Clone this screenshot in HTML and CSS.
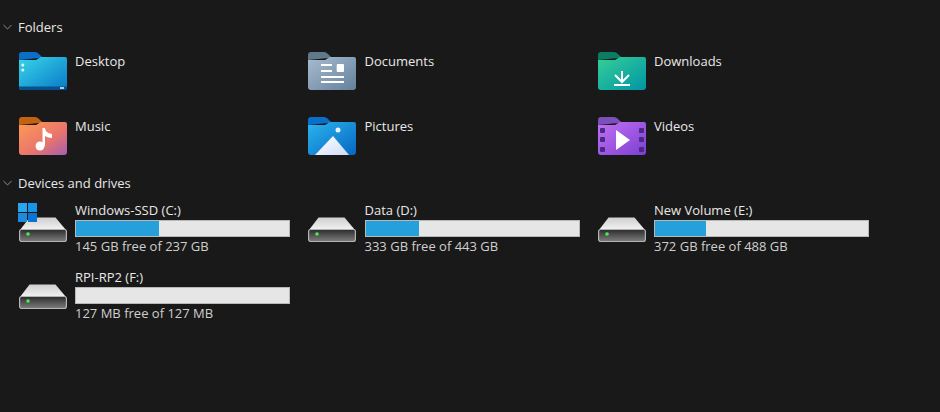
FILE: index.html
```html
<!DOCTYPE html>
<html lang="en">
<head>
<meta charset="utf-8">
<title>This PC</title>
<link rel="stylesheet" href="styles.css">
</head>
<body>
<svg class="defs" width="0" height="0" aria-hidden="true">
  <defs>
    <linearGradient id="gDesktop" x1="0" y1="0" x2="1" y2="1"><stop offset="0" stop-color="#37d6e8"/><stop offset="1" stop-color="#0a78c8"/></linearGradient>
    <linearGradient id="gDocs" x1="0" y1="0" x2="1" y2="1"><stop offset="0" stop-color="#a9bccf"/><stop offset="1" stop-color="#64809c"/></linearGradient>
    <linearGradient id="gDown" x1="0" y1="0" x2="1" y2="1"><stop offset="0" stop-color="#35cf97"/><stop offset="1" stop-color="#0095a5"/></linearGradient>
    <linearGradient id="gMusic" x1="0" y1="0" x2="1" y2="1"><stop offset="0" stop-color="#ff9a52"/><stop offset=".6" stop-color="#e8746e"/><stop offset="1" stop-color="#a45fb0"/></linearGradient>
    <linearGradient id="gPics" x1="0" y1="0" x2="1" y2="1"><stop offset="0" stop-color="#2cb4f0"/><stop offset="1" stop-color="#0567c0"/></linearGradient>
    <linearGradient id="gVideo" x1="0" y1="0" x2="1" y2="1"><stop offset="0" stop-color="#c271f5"/><stop offset="1" stop-color="#7c3fd0"/></linearGradient>
    <linearGradient id="gMount" x1="0" y1="0" x2="1" y2="1"><stop offset="0" stop-color="#fff"/><stop offset="1" stop-color="#cfdcf8"/></linearGradient>
    <linearGradient id="gDriveTop" x1="0" y1="0" x2="0" y2="1"><stop offset="0" stop-color="#cfcfcf"/><stop offset="1" stop-color="#f2f2f2"/></linearGradient>
    <linearGradient id="gDriveFace" x1="0" y1="0" x2="0" y2="1"><stop offset="0" stop-color="#2b2b2b"/><stop offset="1" stop-color="#7d7d7d"/></linearGradient>
    <symbol id="drive" viewBox="0 0 48 25">
      <path d="M10.500 0.500H36.500L47 13H1Z" fill="url(#gDriveTop)"/>
      <rect x="0.600" y="12.500" width="46.800" height="12" rx="2" fill="url(#gDriveFace)" stroke="#b4b4b4" stroke-width="1.200"/>
      <circle cx="9" cy="17" r="1.800" fill="#44f050"/>
    </symbol>
  </defs>
</svg>

<section class="group">
  <h2 class="group-head"><svg class="chevron" viewBox="0 0 10 6"><path d="M0.500 0.700L5 5.200L9.500 0.700"/></svg>Folders</h2>
  <div class="grid folders">
    <div class="item">
      <svg class="folder" viewBox="0 0 48 38">
        <path d="M3 0H16Q18 0 20 2L24 6H20L0 8V3Q0 0 3 0Z" fill="#0a6fc9"/>
        <path d="M0 8H17L22 5H46Q48 5 48 7V35Q48 38 45 38H3Q0 38 0 35Z" fill="url(#gDesktop)"/>
        <path d="M0 34.500H48V35Q48 38 45 38H3Q0 38 0 35Z" fill="#07508e"/>
        <circle cx="3.800" cy="13" r="1.500" fill="#e8fbff"/><circle cx="3.800" cy="18" r="1.500" fill="#e8fbff"/>
        <rect x="41" y="35" width="4" height="2" fill="#a9cfe6"/>
      </svg>
      <span class="name">Desktop</span>
    </div>
    <div class="item">
      <svg class="folder" viewBox="0 0 48 38">
        <path d="M3 0H16Q18 0 20 2L24 6H20L0 8V3Q0 0 3 0Z" fill="#5f7a88"/>
        <path d="M0 8H17L22 5H46Q48 5 48 7V35Q48 38 45 38H3Q0 38 0 35Z" fill="url(#gDocs)"/>
        <path d="M13 13H24M13 19H24M13 25H36M13 30H36" stroke="#fff" stroke-width="2" fill="none"/>
        <rect x="28.700" y="12" width="7.300" height="8" rx="1" fill="#fff"/>
      </svg>
      <span class="name">Documents</span>
    </div>
    <div class="item">
      <svg class="folder" viewBox="0 0 48 38">
        <path d="M3 0H16Q18 0 20 2L24 6H20L0 8V3Q0 0 3 0Z" fill="#0b7d63"/>
        <path d="M0 8H17L22 5H46Q48 5 48 7V35Q48 38 45 38H3Q0 38 0 35Z" fill="url(#gDown)"/>
        <path d="M24 19V29.500M17 23L24 30L31 23M16 33H32" stroke="#fff" stroke-width="2" fill="none"/>
      </svg>
      <span class="name">Downloads</span>
    </div>
    <div class="item">
      <svg class="folder" viewBox="0 0 48 38">
        <path d="M3 0H16Q18 0 20 2L24 6H20L0 8V3Q0 0 3 0Z" fill="#c4630f"/>
        <path d="M0 8H17L22 5H46Q48 5 48 7V35Q48 38 45 38H3Q0 38 0 35Z" fill="url(#gMusic)"/>
        <circle cx="21" cy="29" r="4.500" fill="#fff"/>
        <path d="M23.500 29V11H26Q26 16 33 17V21Q29 21 26 19V29Z" fill="#fff"/>
      </svg>
      <span class="name">Music</span>
    </div>
    <div class="item">
      <svg class="folder" viewBox="0 0 48 38">
        <path d="M3 0H16Q18 0 20 2L24 6H20L0 8V3Q0 0 3 0Z" fill="#0a6fc9"/>
        <path d="M0 8H17L22 5H46Q48 5 48 7V35Q48 38 45 38H3Q0 38 0 35Z" fill="url(#gPics)"/>
        <circle cx="30" cy="13" r="2.500" fill="#e6f5ff"/>
        <path d="M7 38L25 19L41 38Z" fill="url(#gMount)"/>
      </svg>
      <span class="name">Pictures</span>
    </div>
    <div class="item">
      <svg class="folder" viewBox="0 0 48 38">
        <path d="M3 0H16Q18 0 20 2L24 6H20L0 8V3Q0 0 3 0Z" fill="#7d4fb8"/>
        <path d="M0 8H17L22 5H46Q48 5 48 7V35Q48 38 45 38H3Q0 38 0 35Z" fill="url(#gVideo)"/>
        <g fill="#4b2a86"><rect x="2" y="11" width="5" height="5" rx="1"/><rect x="2" y="20" width="5" height="5" rx="1"/><rect x="2" y="30" width="5" height="5" rx="1"/><rect x="41" y="11" width="5" height="5" rx="1"/><rect x="41" y="20" width="5" height="5" rx="1"/><rect x="41" y="30" width="5" height="5" rx="1"/></g>
        <path d="M18 13L32 23L18 33Z" fill="#fff"/>
      </svg>
      <span class="name">Videos</span>
    </div>
  </div>
</section>

<section class="group">
  <h2 class="group-head"><svg class="chevron" viewBox="0 0 10 6"><path d="M0.500 0.700L5 5.200L9.500 0.700"/></svg>Devices and drives</h2>
  <div class="grid drives">
    <div class="drive">
      <svg class="drive-icon"><use href="#drive"/></svg>
      <svg class="win-badge" viewBox="0 0 19 19">
        <rect x="0" y="0" width="9" height="9" fill="#2aa6ee"/><rect x="10" y="0" width="9" height="9" fill="#1b94e6"/>
        <rect x="0" y="10" width="9" height="9" fill="#1b8be0"/><rect x="10" y="10" width="9" height="9" fill="#0b74d2"/>
      </svg>
      <div class="info">
        <div class="name">Windows-SSD (C:)</div>
        <div class="bar"><div class="fill" style="width:38.8%"></div></div>
        <div class="sub">145 GB free of 237 GB</div>
      </div>
    </div>
    <div class="drive">
      <svg class="drive-icon"><use href="#drive"/></svg>
      <div class="info">
        <div class="name">Data (D:)</div>
        <div class="bar"><div class="fill" style="width:25%"></div></div>
        <div class="sub">333 GB free of 443 GB</div>
      </div>
    </div>
    <div class="drive">
      <svg class="drive-icon"><use href="#drive"/></svg>
      <div class="info">
        <div class="name">New Volume (E:)</div>
        <div class="bar"><div class="fill" style="width:23.8%"></div></div>
        <div class="sub">372 GB free of 488 GB</div>
      </div>
    </div>
    <div class="drive">
      <svg class="drive-icon"><use href="#drive"/></svg>
      <div class="info">
        <div class="name">RPI-RP2 (F:)</div>
        <div class="bar"><div class="fill" style="width:0"></div></div>
        <div class="sub">127 MB free of 127 MB</div>
      </div>
    </div>
  </div>
</section>
</body>
</html>
```

FILE: styles.css
```css
html, body {
  margin: 0;
  height: 100%;
}
body {
  background: #191919;
  color: #e8e8e8;
  font-family: "Open Sans", "Liberation Sans", sans-serif;
  font-size: 13px;
  line-height: 18px;
  overflow: hidden;
}
.defs {
  position: absolute;
}
.group-head {
  display: flex;
  align-items: center;
  gap: 6px;
  height: 18px;
  margin: 0;
  padding-left: 3px;
  font: inherit;
}
.group:first-of-type {
  padding-top: 18px;
}
.group + .group {
  margin-top: 19px;
}
.chevron {
  width: 9px;
  height: 6px;
  fill: none;
  stroke: #9a9a9a;
  stroke-width: 1;
}
.grid {
  display: grid;
  grid-template-columns: repeat(3, 289.5px);
  padding-left: 18.5px;
}
.folders {
  margin-top: 16px;
  row-gap: 27px;
}
.item {
  display: flex;
  align-items: flex-start;
  gap: 8.5px;
  height: 38px;
}
.folder {
  width: 48px;
  height: 38px;
  flex: none;
}
.drives {
  margin-top: 9px;
  row-gap: 13px;
}
.drive {
  position: relative;
  display: flex;
  gap: 8.5px;
}
.drive-icon {
  width: 48px;
  height: 25px;
  margin-top: 16px;
  flex: none;
}
.win-badge {
  position: absolute;
  left: -1px;
  top: 2px;
  width: 19px;
  height: 19px;
}
.info {
  width: 215px;
}
.info .name {
  height: 19px;
}
.bar {
  height: 17px;
  box-sizing: border-box;
  background: #e6e6e6;
  border: 1px solid #b8b8b8;
}
.fill {
  height: 100%;
  background: #26a0da;
}
.sub {
  color: #cfcfcf;
}
```
